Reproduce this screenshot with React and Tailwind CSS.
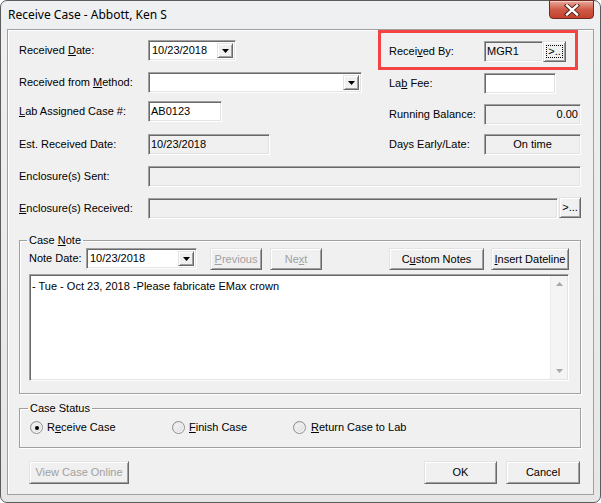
import React from "react";

const sunken =
  "border border-t-[#a0a0a0] border-l-[#a0a0a0] border-b-white border-r-white shadow-[inset_1px_1px_0_#696969,inset_-1px_-1px_0_#e3e3e3]";
const raised =
  "border border-t-[#e3e3e3] border-l-[#e3e3e3] border-b-[#696969] border-r-[#696969] shadow-[inset_1px_1px_0_#ffffff,inset_-1px_-1px_0_#a0a0a0] bg-[#f0f0f0]";

function U({ children }) {
  return <span className="underline underline-offset-[1px] decoration-1">{children}</span>;
}

function Tri({ color = "#000" }) {
  return (
    <svg width="7" height="4" viewBox="0 0 7 4">
      <polygon points="0,0 7,0 3.5,4" fill={color} />
    </svg>
  );
}

function Combo({ w, value }) {
  return (
    <div className={`${sunken} bg-white h-[21px] flex items-stretch p-[2px] ${w}`}>
      <div className="flex-1 flex items-center pl-[1px] leading-none">{value}</div>
      <div className={`${raised} w-[16px] flex items-center justify-center`}>
        <Tri />
      </div>
    </div>
  );
}

function Field({ w, value, ro, align = "justify-start", extra = "" }) {
  return (
    <div
      className={`${sunken} ${ro ? "bg-[#f0f0f0]" : "bg-white"} h-[21px] flex items-center px-[2px] leading-none ${align} ${w} ${extra}`}
    >
      {value}
    </div>
  );
}

function Btn({ w, h = "h-[23px]", children, disabled, extra = "" }) {
  return (
    <div
      className={`${raised} ${w} ${h} flex items-center justify-center leading-none ${disabled ? "text-[#a0a0a0]" : "text-black"} ${extra}`}
    >
      {children}
    </div>
  );
}

function Radio({ checked }) {
  return (
    <div className="w-[13px] h-[13px] rounded-full border border-[#8f8f8f] bg-gradient-to-br from-[#dcdcdc] to-[#ffffff] flex items-center justify-center">
      <div className="w-[9px] h-[9px] rounded-full bg-gradient-to-br from-[#f4f4f4] to-[#e0e0e0] flex items-center justify-center">
        {checked && <div className="w-[4px] h-[4px] rounded-full bg-black" />}
      </div>
    </div>
  );
}

function CloseBtn() {
  return (
    <div className="w-[45px] h-[19px] -mt-[1px] rounded-b-[4px] border border-[#6e2a21] bg-gradient-to-b from-[#e8a79b] via-[#cf5a47] to-[#c4412e] flex items-center justify-center shadow-[inset_0_1px_0_rgba(255,255,255,0.45)]">
      <svg width="16" height="12" viewBox="0 0 16 12">
        <path d="M3 1.5 L13 10.5 M13 1.5 L3 10.5" stroke="#4a1d16" strokeWidth="4.2" strokeLinecap="square" />
        <path d="M3 1.5 L13 10.5 M13 1.5 L3 10.5" stroke="#ffffff" strokeWidth="2.4" strokeLinecap="square" />
      </svg>
    </div>
  );
}

export default function App() {
  return (
    <div className="w-[601px] h-[503px] bg-white font-['Liberation_Sans',Arial,sans-serif] text-[11px] text-black">
      <div className="relative w-[601px] h-[503px] rounded-[7px] border border-[#5c5c5c] bg-gradient-to-b from-[#eef0f2] to-[#e6e6e6] flex flex-col px-[6px] pb-[7px]">
        {/* Title bar */}
        <div className="h-[28px] flex items-start justify-between shrink-0">
          <div className="mt-[6px] pl-[1px] font-['Noto_Sans',sans-serif] text-[12px] leading-[16px] text-black">
            Receive Case - Abbott, Ken S
          </div>
          <CloseBtn />
        </div>

        {/* Client area */}
        <div className="flex-1 border border-[#a0a0a0] bg-[#f0f0f0] shadow-[inset_1px_1px_0_#ffffff] flex flex-col">
          <div className="pl-[11px] pr-[12px] pt-[10px] flex flex-col">
            {/* Row A */}
            <div className="flex h-[21px] items-start">
              <div className="w-[370px] flex items-center h-[21px]">
                <div className="w-[129px]">
                  Received <U>D</U>ate:
                </div>
                <Combo w="w-[88px]" value="10/23/2018" />
              </div>
              <div className="flex items-center mt-[1px]">
                <div className="w-[95px]">
                  Recei<U>v</U>ed By:
                </div>
                <Field w="w-[59px]" value="MGR1" ro />
                <div className={`${raised} w-[23px] h-[21px] flex items-center justify-center`}>
                  <div className="w-[17px] h-[13px] border border-dotted border-black flex items-center justify-center leading-none">
                    &gt;..
                  </div>
                </div>
              </div>
            </div>

            {/* Row B */}
            <div className="flex h-[21px] items-start mt-[11px]">
              <div className="w-[370px] flex items-center h-[21px]">
                <div className="w-[129px]">
                  Received from <U>M</U>ethod:
                </div>
                <Combo w="w-[214px]" value="" />
              </div>
              <div className="flex items-center mt-[1px]">
                <div className="w-[95px]">
                  La<U>b</U> Fee:
                </div>
                <Field w="w-[72px]" value="" />
              </div>
            </div>

            {/* Row C */}
            <div className="flex h-[21px] items-start mt-[8px]">
              <div className="w-[370px] flex items-center h-[21px]">
                <div className="w-[129px]">
                  <U>L</U>ab Assigned Case #:
                </div>
                <Field w="w-[74px]" value="AB0123" />
              </div>
              <div className="flex items-center mt-[3px]">
                <div className="w-[95px]">Running Balance:</div>
                <Field w="w-[97px]" value="0.00" ro align="justify-end" />
              </div>
            </div>

            {/* Row D */}
            <div className="flex h-[21px] items-start mt-[12px]">
              <div className="w-[370px] flex items-center h-[21px]">
                <div className="w-[129px]">Est. Received Date:</div>
                <Field w="w-[122px]" value="10/23/2018" ro />
              </div>
              <div className="flex items-center">
                <div className="w-[95px]">Days Early/Late:</div>
                <Field w="w-[97px]" value="On time" ro align="justify-center" />
              </div>
            </div>

            {/* Row E */}
            <div className="flex h-[21px] items-center mt-[11px]">
              <div className="w-[129px]">Enclosure(s) Sent:</div>
              <Field w="flex-1" value="" ro />
            </div>

            {/* Row F */}
            <div className="flex h-[21px] items-start mt-[11px]">
              <div className="w-[129px] h-[21px] flex items-center">
                <U>E</U>nclosure(s) Received:
              </div>
              <Field w="w-[410px]" value="" ro />
              <Btn w="w-[22px]" h="h-[21px]" extra="ml-[1px] -mt-[1px]">
                &gt;...
              </Btn>
            </div>

            {/* Case Note group */}
            <fieldset className="mt-[15px] border border-[#a0a0a0] shadow-[1px_1px_0_#ffffff,inset_1px_1px_0_#ffffff] pl-[9px] pr-[11px] pb-[12px] min-w-0">
              <legend className="ml-[-2px] px-[2px] leading-[13px]">
                Case <U>N</U>ote
              </legend>
              <div className="flex items-start h-[22px] mt-[1px]">
                <div className="w-[57px] h-[21px] flex items-center">Note Date:</div>
                <Combo w="w-[111px]" value="10/23/2018" />
                <Btn w="w-[52px]" h="h-[22px]" disabled extra="ml-[13px]">
                  <U>P</U>revious
                </Btn>
                <Btn w="w-[52px]" h="h-[22px]" disabled extra="ml-[8px]">
                  Ne<U>x</U>t
                </Btn>
                <Btn w="w-[95px]" h="h-[22px]" extra="ml-[67px]">
                  C<U>u</U>stom Notes
                </Btn>
                <Btn w="w-[78px]" h="h-[22px]" extra="ml-[7px]">
                  <U>I</U>nsert Dateline
                </Btn>
              </div>
              <div className={`${sunken} bg-white h-[107px] mt-[4px] p-[1px] flex`}>
                <div className="flex-1 pl-[1px] pt-[4px] leading-[13px]">
                  - Tue - Oct 23, 2018 -Please fabricate EMax crown
                </div>
                <div className="w-[17px] bg-[#f4f4f4] border-l border-[#eaeaea] flex flex-col justify-between items-center py-[6px]">
                  <svg width="7" height="4" viewBox="0 0 7 4">
                    <polygon points="0,4 7,4 3.5,0" fill="#a8a8a8" />
                  </svg>
                  <Tri color="#a8a8a8" />
                </div>
              </div>
            </fieldset>

            {/* Case Status group */}
            <fieldset className="mt-[8px] border border-[#a0a0a0] shadow-[1px_1px_0_#ffffff,inset_1px_1px_0_#ffffff] pl-[10px] pb-[13px] min-w-0">
              <legend className="ml-[-2px] px-[2px] leading-[13px]">Case Status</legend>
              <div className="flex items-center h-[13px] mt-[6px]">
                <div className="w-[142px] flex items-center gap-[4px]">
                  <Radio checked />
                  <span>
                    R<U>e</U>ceive Case
                  </span>
                </div>
                <div className="w-[121px] flex items-center gap-[4px]">
                  <Radio />
                  <span>
                    <U>F</U>inish Case
                  </span>
                </div>
                <div className="flex items-center gap-[5px]">
                  <Radio />
                  <span>
                    <U>R</U>eturn Case to Lab
                  </span>
                </div>
              </div>
            </fieldset>

            {/* Bottom buttons */}
            <div className="flex items-center mt-[13px] pl-[10px] pr-[1px]">
              <Btn w="w-[100px]" disabled>
                View Case Online
              </Btn>
              <Btn w="w-[73px]" extra="ml-auto">
                OK
              </Btn>
              <Btn w="w-[74px]" extra="ml-[9px]">
                Cancel
              </Btn>
            </div>
          </div>
        </div>

        {/* Annotation overlay */}
        <div className="absolute left-[377px] top-[29px] w-[200px] h-[40px] border-[3px] border-[#f34343] pointer-events-none" />
      </div>
    </div>
  );
}
